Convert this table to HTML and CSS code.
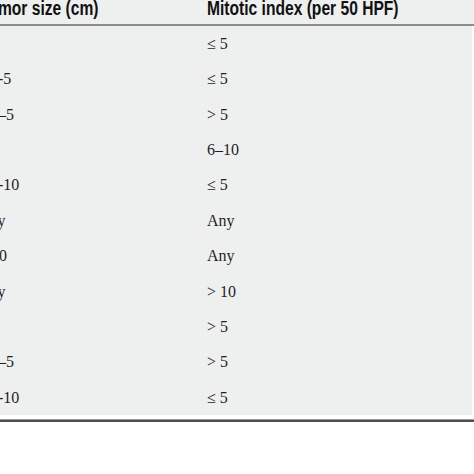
FILE: index.html
```html
<!DOCTYPE html>
<html>
<head>
<meta charset="utf-8">
<link rel="stylesheet" href="styles.css">
</head>
<body>
<div class="page">
  <div class="head">
    <div class="hcell"><span class="htext">Tumor size (cm)</span></div>
    <div class="hcell"><span class="htext">Mitotic index (per 50 HPF)</span></div>
  </div>
  <div class="rows">
    <div class="cell">≤ 2</div><div class="cell">≤ 5</div>
    <div class="cell">2.1-5</div><div class="cell">≤ 5</div>
    <div class="cell">2.1–5</div><div class="cell">&gt; 5</div>
    <div class="cell">&lt; 5</div><div class="cell">6–10</div>
    <div class="cell">5.1-10</div><div class="cell">≤ 5</div>
    <div class="cell">Any</div><div class="cell">Any</div>
    <div class="cell">&gt; 10</div><div class="cell">Any</div>
    <div class="cell">Any</div><div class="cell">&gt; 10</div>
    <div class="cell">&gt; 5</div><div class="cell">&gt; 5</div>
    <div class="cell">2.1–5</div><div class="cell">&gt; 5</div>
    <div class="cell">5.1-10</div><div class="cell">≤ 5</div>
  </div>
  <div class="rule"></div>
</div>
</body>
</html>
```

FILE: styles.css
```css
html, body {
  margin: 0;
  padding: 0;
  background: #ffffff;
  overflow: hidden;
}
.page {
  width: 474px;
  height: 474px;
  overflow: hidden;
}
.head {
  display: grid;
  grid-template-columns: 229px 1fr;
  margin-left: -22px;
  height: 24px;
  border-bottom: 2px solid #8c8c8c;
  background: #eef0ef;
}
.hcell {
  font-family: "Liberation Sans", Arial, sans-serif;
  font-weight: bold;
  font-size: 20px;
  line-height: 16px;
  color: #111111;
  white-space: nowrap;
}
.hcell:first-child {
  padding-left: 2px;
}
.htext {
  display: inline-block;
  transform: scaleX(0.78);
  transform-origin: left center;
}
.rows {
  display: grid;
  grid-template-columns: 229px 1fr;
  grid-auto-rows: 35.36px;
  margin-left: -22px;
  margin-right: 2px;
  background: #eef0ef;
}
.cell {
  font-family: "Liberation Serif", "Times New Roman", serif;
  font-size: 16px;
  line-height: 35.36px;
  color: #1f1f1f;
  white-space: nowrap;
}
.rule {
  margin-top: 4px;
  height: 2px;
  background: #4e4e4e;
  border-top: 1px solid #9a9a9a;
}
```
